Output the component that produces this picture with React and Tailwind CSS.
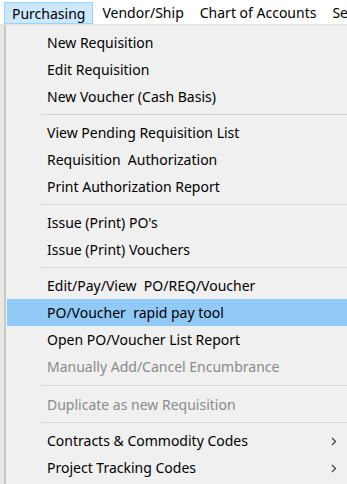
import React from 'react';

const groups = [
  [
    { label: 'New Requisition' },
    { label: 'Edit Requisition' },
    { label: 'New Voucher (Cash Basis)' },
  ],
  [
    { label: 'View Pending Requisition List' },
    { label: 'Requisition\u00a0 Authorization' },
    { label: 'Print Authorization Report' },
  ],
  [
    { label: "Issue (Print) PO's" },
    { label: 'Issue (Print) Vouchers' },
  ],
  [
    { label: 'Edit/Pay/View\u00a0 PO/REQ/Voucher' },
    { label: 'PO/Voucher\u00a0 rapid pay tool', active: true },
    { label: 'Open PO/Voucher List Report' },
    { label: 'Manually Add/Cancel Encumbrance', disabled: true },
  ],
  [{ label: 'Duplicate as new Requisition', disabled: true }],
  [
    { label: 'Contracts & Commodity Codes', sub: true },
    { label: 'Project Tracking Codes', sub: true },
  ],
];

const MenuItem = ({ label, active, disabled, sub }) => (
  <div
    className={`flex items-center h-[27px] pl-[40px] pr-[10px] ${active ? 'bg-[#91c9f7]' : ''} ${disabled ? 'text-[#8a8a8a]' : 'text-black'}`}
  >
    <span className="flex-1 whitespace-nowrap">{label}</span>
    {sub && (
      <svg width="6" height="9" viewBox="0 0 6 9" className="mt-[1px]">
        <path d="M1 1 L4.5 4.5 L1 8" fill="none" stroke="#444" strokeWidth="1.3" />
      </svg>
    )}
  </div>
);

export default function App() {
  return (
    <div
      className="w-[347px] h-[484px] overflow-hidden bg-[#f0f0f0] text-[14px]"
      style={{ fontFamily: '"Segoe UI", "Noto Sans", sans-serif' }}
    >
      <div className="flex items-stretch h-[25px] bg-white border-b border-[#e5e5e5]">
        <div className="ml-[4px] mt-[2px] px-[7px] flex items-center bg-[#cce8ff] border border-[#99d1ff]">
          Purchasing
        </div>
        <div className="pl-[9px] pr-[8px] flex items-center">Vendor/Ship</div>
        <div className="px-[8px] flex items-center whitespace-nowrap">Chart of Accounts</div>
        <div className="px-[8px] flex items-center">Se</div>
      </div>
      <div className="flex h-[459px]">
        <div className="w-[4px] bg-[#e8e8e4]" />
        <div className="w-[2px] bg-[#c8c8c0]" />
        <div className="flex-1 pt-[4px] ml-[1px]">
          {groups.map((g, i) => (
            <div key={i}>
              {i > 0 && (
                <div className={`pl-[34px] ${i === 4 ? 'py-[5px]' : 'py-[4px]'}`}>
                  <div className="h-px bg-[#d4d4d4]" />
                </div>
              )}
              {g.map((it) => (
                <MenuItem key={it.label} {...it} />
              ))}
            </div>
          ))}
        </div>
      </div>
    </div>
  );
}
